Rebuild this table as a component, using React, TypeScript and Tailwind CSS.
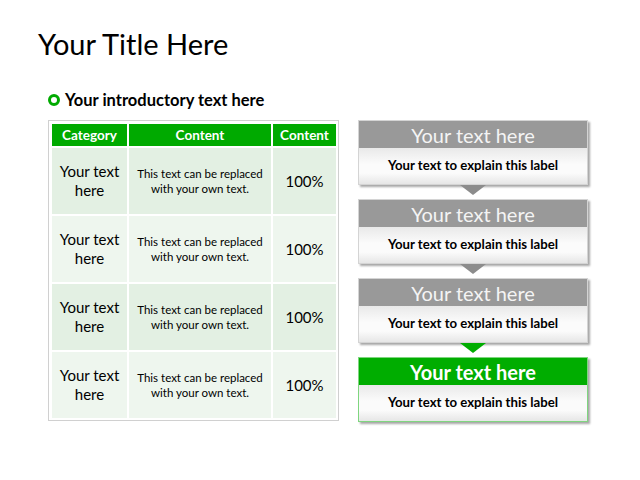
import React from "react";

const rows = [
  "bg-[#e3f0e3]",
  "bg-[#eef6ee]",
  "bg-[#e3f0e3]",
  "bg-[#eef6ee]",
];

function Box({ green }: { green?: boolean }) {
  return (
    <div
      className={
        "w-[230px] h-[65px] flex flex-col border shadow-[2px_2px_2px_rgba(0,0,0,0.35)] " +
        (green ? "border-[#7fd67f]" : "border-[#d4d4d4]")
      }
    >
      <div
        className={
          "h-[27px] flex items-center justify-center leading-none " +
          (green
            ? "bg-[#00ad00] text-white font-bold text-[20px]"
            : "bg-[#999999] text-[#f4f4f4] text-[20px]")
        }
      >
        Your text here
      </div>
      <div className="flex-1 flex items-center justify-center bg-[linear-gradient(#e9e9e9,#fbfbfb_45%,#fbfbfb_70%,#e6e6e6)] text-[13.2px] font-bold text-black">
        Your text to explain this label
      </div>
    </div>
  );
}

function Arrow({ green }: { green?: boolean }) {
  return (
    <div className="h-[14px] flex justify-center">
      <div
        className={
          "w-0 h-0 border-l-[13px] border-r-[13px] border-t-[10px] border-l-transparent border-r-transparent " +
          (green ? "border-t-[#00ad00]" : "border-t-[#8c8c8c]")
        }
      />
    </div>
  );
}

export default function App() {
  return (
    <div
      className="w-[640px] h-[480px] bg-white text-black relative overflow-hidden"
      style={{ fontFamily: "Lato, 'Open Sans', sans-serif" }}
    >
      <div className="pl-[38px] pt-[26px] text-[29px] leading-[36px]">Your Title Here</div>
      <div className="flex pl-[48px] pt-[30px] gap-[19px]">
        <div className="flex flex-col">
          <div className="flex items-center gap-[5px] h-[20px] -mt-[2px]">
            <div className="w-[12px] h-[12px] rounded-full border-[3px] border-[#00aa00]" />
            <div className="font-bold text-[16.5px] leading-none">Your introductory text here</div>
          </div>
          <div className="mt-[10px] w-[291px] border border-[#d0d0d0] p-[3px] pb-[2px]">
            <div className="grid grid-cols-[75px_142px_63px] gap-[2px]">
              <div className="h-[22px] bg-[#00aa00] text-white font-bold text-[13.5px] flex items-center justify-center">Category</div>
              <div className="h-[22px] bg-[#00aa00] text-white font-bold text-[13.5px] flex items-center justify-center">Content</div>
              <div className="h-[22px] bg-[#00aa00] text-white font-bold text-[13.5px] flex items-center justify-center">Content</div>
              {rows.map((bg, i) => (
                <React.Fragment key={i}>
                  <div className={"h-[66px] flex items-center justify-center text-center text-[15px] leading-[19px] " + bg}>
                    Your text
                    <br />
                    here
                  </div>
                  <div className={"h-[66px] flex items-center justify-center text-center text-[11.5px] leading-[15px] " + bg}>
                    This text can be replaced
                    <br />
                    with your own text.
                  </div>
                  <div className={"h-[66px] flex items-center justify-center text-[15px] " + bg}>100%</div>
                </React.Fragment>
              ))}
            </div>
          </div>
        </div>
        <div className="flex flex-col pt-[28px]">
          <Box />
          <Arrow />
          <Box />
          <Arrow />
          <Box />
          <Arrow green />
          <Box green />
        </div>
      </div>
    </div>
  );
}
